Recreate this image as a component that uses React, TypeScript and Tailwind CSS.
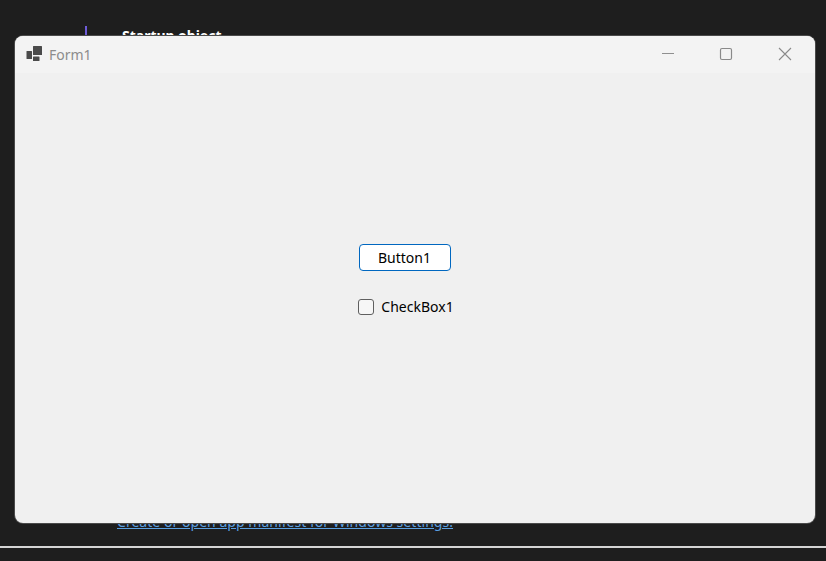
import React from 'react';

function WindowControls() {
  return (
    <div className="flex items-center pr-[2px] pb-[1px]">
      <button className="w-[58px] h-[36px] flex items-center justify-center">
        <svg width="14" height="14" viewBox="0 0 14 14" fill="none" stroke="#8f8f8f" strokeWidth="1">
          <path d="M1 6.5h12" />
        </svg>
      </button>
      <button className="w-[58px] h-[36px] flex items-center justify-center">
        <svg width="14" height="14" viewBox="0 0 14 14" fill="none" stroke="#8a8a8a" strokeWidth="1.2">
          <rect x="1.5" y="1.5" width="11" height="11" rx="1.5" />
        </svg>
      </button>
      <button className="w-[58px] h-[36px] flex items-center justify-center pl-[2px]">
        <svg width="14" height="14" viewBox="0 0 14 14" fill="none" stroke="#8a8a8a" strokeWidth="1.1">
          <path d="M1 1l12 12M13 1L1 13" />
        </svg>
      </button>
    </div>
  );
}

export default function App() {
  return (
    <div className="relative w-[826px] h-[561px] overflow-hidden bg-[#1e1e1e] font-['Noto_Sans',sans-serif]">
      {/* project settings page behind the form */}
      <div className="flex flex-col h-full">
        <div className="flex pl-[85px] pt-[26px] h-[509px]">
          <div className="w-[2px] h-[14px] bg-[#6d5bd8]" />
          <div className="ml-[35px] text-[14px] leading-[20px] font-bold text-white">Startup object</div>
        </div>
        <div className="pl-[117px] h-[37px]">
          <a className="text-[14px] leading-[24px] tracking-[0.04px] text-[#5a9fe0] underline">Create or open app manifest for Windows settings.</a>
        </div>
        <div className="h-[2px] bg-[#d4d4d4]" />
      </div>

      {/* floating form window */}
      <div className="absolute left-[15px] top-[36px] w-[800px] h-[487px] rounded-[8px] overflow-hidden bg-[#f0f0f0] flex flex-col shadow-[0_0_0_1px_#4a4a4a]">
        <div className="h-[37px] shrink-0 bg-[#f3f3f3] flex items-center justify-between pl-[11px]">
          <div className="flex items-center gap-[7px]">
            <svg width="16" height="17" viewBox="0 0 16 17" fill="#4a4a4a">
              <rect x="7" y="0" width="9" height="9" rx="0.5" />
              <rect x="0.5" y="5" width="5.5" height="8" rx="0.5" />
              <rect x="7" y="10.5" width="6.5" height="4.5" rx="0.5" />
            </svg>
            <span className="text-[14px] text-[#8c8c8c]">Form1</span>
          </div>
          <WindowControls />
        </div>
        <div className="flex-1 flex flex-col items-center pt-[171px] pr-[20px]">
          <button className="w-[92px] h-[27px] rounded-[4px] border border-[#0067c0] bg-white text-[14px] text-black flex items-center justify-center pr-[1px]">
            Button1
          </button>
          <label className="mt-[25px] flex items-center gap-[7px] text-[14px] text-black translate-x-px">
            <span className="w-[16px] h-[16px] rounded-[3px] border border-[#5f5f5f] bg-[#f6f6f6]" />
            CheckBox1
          </label>
        </div>
      </div>
    </div>
  );
}
